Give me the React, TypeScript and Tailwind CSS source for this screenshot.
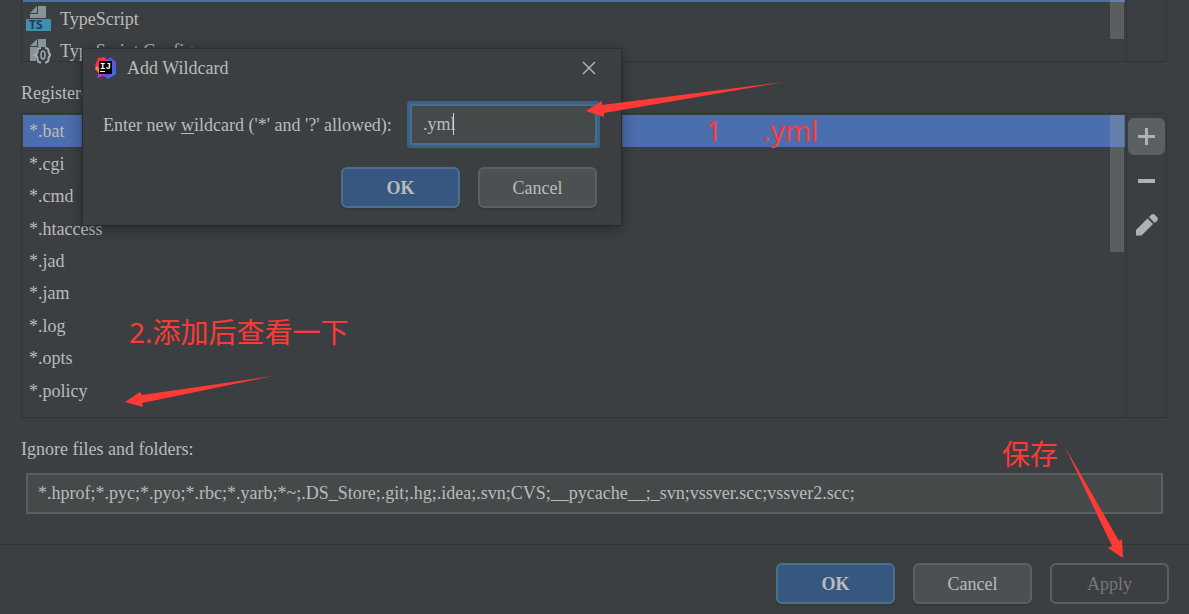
import { useState } from "react";
import type { ReactNode } from "react";

const patterns = [
  "*.bat",
  "*.cgi",
  "*.cmd",
  "*.htaccess",
  "*.jad",
  "*.jam",
  "*.log",
  "*.opts",
  "*.policy",
];

const TypeScriptIcon = () => (
  <svg width="25" height="26" viewBox="0 0 25 26" className="shrink-0" aria-hidden="true">
    <path d="M4 7 11 0v7z" fill="#87939a" />
    <path d="M12 0h8v12H4V8h8z" fill="#87939a" />
    <rect y="13" width="25" height="12" fill="#3e8fb0" />
    <text x="3" y="23" fontSize="12" fontWeight="700" fontFamily="Open Sans, sans-serif" fill="#22404e">
      TS
    </text>
  </svg>
);

const TypeScriptConfigIcon = () => (
  <svg width="25" height="26" viewBox="0 0 25 26" className="shrink-0" aria-hidden="true">
    <path d="M4 8 11 1v7z" fill="#87939a" />
    <path d="M12 1h8v22H4V9h8z" fill="#87939a" />
    <path d="M12 9h9l4 3v14H10V18l-2-1 2-2z" fill="#3c3f41" />
    <g fill="none" stroke="#a3adb3">
      <path
        d="M15 10c-3 0-3.500 1-3.500 3s0 3-2.500 4c2.500 1 2.500 2 2.500 4s.5 3.500 3.500 3.500M19 10c3 0 3.500 1 3.500 3s0 3 2.500 4c-2.500 1-2.500 2-2.500 4s-.5 3.500-3.500 3.500"
        strokeWidth="2"
      />
      <ellipse cx="17" cy="17" rx="2" ry="4" strokeWidth="1.500" />
    </g>
  </svg>
);

const IdeaLogo = () => (
  <svg width="22" height="22" viewBox="0 0 22 22" className="shrink-0" aria-hidden="true">
    <defs>
      <linearGradient id="ideaPink" x1="0" y1="0" x2="0.4" y2="1">
        <stop offset="0" stopColor="#ff2d5b" />
        <stop offset="0.5" stopColor="#e8315f" />
        <stop offset="1" stopColor="#9140d8" />
      </linearGradient>
      <linearGradient id="ideaBlue" x1="0" y1="0" x2="1" y2="1">
        <stop offset="0" stopColor="#2f6df2" />
        <stop offset="0.5" stopColor="#6150d6" />
        <stop offset="1" stopColor="#1f7df5" />
      </linearGradient>
    </defs>
    <path d="M3 8 0 12l4 4z" fill="#fd8425" />
    <path d="M3 1 9 0l6 5-3 13-10 3 2-7-4-5z" fill="url(#ideaPink)" />
    <path d="M0 11 2 9l2 2v5z" fill="#fd8425" />
    <path d="M12 3 15 0l6 5v12l-8 5-6-4h6z" fill="url(#ideaBlue)" />
    <rect x="4" y="4" width="13" height="13" fill="#000" />
    <text x="5" y="12" fontSize="9" fontWeight="700" fontFamily="Liberation Mono, monospace" fill="#fff">
      IJ
    </text>
    <rect x="5" y="14" width="5" height="1" fill="#fff" />
  </svg>
);

interface ButtonProps {
  kind: "primary" | "plain" | "disabled";
  children: ReactNode;
  onClick?: () => void;
}

const buttonKinds = {
  primary: "border-[#4c708c] bg-[#365880] font-bold shadow-[0_2px_2px_#35383a]",
  plain: "border-[#5e6060] bg-[#4c5052] shadow-[0_2px_2px_#35383a]",
  disabled: "border-[#5e6060] text-[#777777]",
};

const DialogButton = ({ kind, children, onClick }: ButtonProps) => (
  <button
    type="button"
    disabled={kind === "disabled"}
    onClick={onClick}
    className={`h-[41px] w-[119px] rounded-md border-2 ${buttonKinds[kind]}`}
  >
    {children}
  </button>
);

const Arrow = ({ points, className }: { points: string; className: string }) => (
  <svg className={`pointer-events-none absolute z-20 ${className}`} aria-hidden="true">
    <polygon points={points} fill="#ff3a36" />
  </svg>
);

const Note = ({ children, className }: { children: ReactNode; className: string }) => (
  <span
    className={`pointer-events-none absolute z-20 whitespace-pre font-['Noto_Sans','Noto_Sans_CJK_SC',sans-serif] text-[28px] leading-9 text-[#ff3a36] ${className}`}
  >
    {children}
  </span>
);

const AddWildcardDialog = () => {
  const [wildcard, setWildcard] = useState(".yml");

  return (
    <div
      role="dialog"
      aria-label="Add Wildcard"
      className="absolute left-[83px] top-[49px] z-10 w-[538px] bg-[#3c3f41] pb-[17px] pl-5 pr-6 shadow-[0_3px_14px_rgba(0,0,0,0.4),0_0_1px_1px_#333537]"
    >
      <div className="-ml-2 flex h-[38px] items-center gap-[10px]">
        <IdeaLogo />
        <h2 className="flex-1">Add Wildcard</h2>
        <button type="button" aria-label="Close">
          <svg width="15" height="14" viewBox="0 0 15 14" aria-hidden="true">
            <path d="M1 1l12 12M13 1 1 13" stroke="#b8babb" strokeWidth="1.4" />
          </svg>
        </button>
      </div>

      <div className="mt-[17px] flex items-center gap-[18px]">
        <label htmlFor="wildcard" className="whitespace-nowrap">
          Enter new <span className="underline underline-offset-2">w</span>ildcard ('*' and '?' allowed):
        </label>
        <div className="relative min-w-0 flex-1">
          <input
            id="wildcard"
            type="text"
            value={wildcard}
            onChange={(e) => setWildcard(e.target.value)}
            className="block h-[41px] w-full rounded-[1px] border-2 border-[#466d94] bg-[#45494a] px-[11px] ring-3 ring-[#3d6185] outline-none"
          />
          {/* text caret */}
          <span className="pointer-events-none absolute left-[43px] top-[9px] h-[22px] w-px bg-[#d0d0d0]" />
        </div>
      </div>

      <div className="mt-[22px] flex justify-end gap-[18px]">
        <DialogButton kind="primary">OK</DialogButton>
        <DialogButton kind="plain">Cancel</DialogButton>
      </div>
    </div>
  );
};

export default function App() {
  const [selected, setSelected] = useState(0);
  const [ignored, setIgnored] = useState(
    "*.hprof;*.pyc;*.pyo;*.rbc;*.yarb;*~;.DS_Store;.git;.hg;.idea;.svn;CVS;__pycache__;_svn;vssver.scc;vssver2.scc;",
  );

  return (
    <div className="relative min-h-screen overflow-hidden bg-[#3c3f41] font-['Liberation_Serif',serif] text-lg leading-6 text-[#bbbbbb]">
      <main className="pl-[21px] pr-[22px]">
        {/* Recognized file types */}
        <section className="flex h-[62px] border border-t-0 border-[#323435]">
          <div className="relative flex-1 px-px">
            <div className="h-[2px] bg-[#4b6eaf]" />
            <ul>
              <li className="flex h-[33px] items-center gap-[9px] pl-[3px]">
                <TypeScriptIcon />
                TypeScript
              </li>
              <li className="flex h-8 items-center gap-[9px] pl-[3px]">
                <TypeScriptConfigIcon />
                TypeScript Config
              </li>
            </ul>
            <div className="absolute right-[2px] top-0 h-[39px] w-[14px] bg-[#a6a6a6]/30" />
          </div>
          <div className="w-10 border-l border-[#323435]" />
        </section>

        {/* Registered patterns */}
        <h3 className="mb-2 mt-[19px]">Registered Patterns:</h3>
        <section className="flex h-[305px] border border-[#323435]">
          <div className="relative flex-1 p-px">
            <ul className="grid h-[292px] grid-rows-9">
              {patterns.map((pattern, i) => (
                <li
                  key={pattern}
                  onClick={() => setSelected(i)}
                  className={`flex items-center pl-[6px] ${i === selected ? "bg-[#4b6eaf]" : ""}`}
                >
                  {pattern}
                </li>
              ))}
            </ul>
            <div className="absolute right-[2px] top-px h-[137px] w-[14px] bg-[#a6a6a6]/30" />
          </div>
          <div className="flex w-10 flex-col items-center gap-[7px] border-l border-[#323435] pt-1">
            <button
              type="button"
              aria-label="Add"
              className="grid size-[37px] place-items-center rounded-md bg-[#5b6062]"
            >
              <svg width="17" height="17" viewBox="0 0 17 17" aria-hidden="true">
                <path d="M7 0h3v7h7v3h-7v7H7v-7H0V7h7z" fill="#afb1b3" />
              </svg>
            </button>
            <button type="button" aria-label="Remove" className="grid size-[37px] place-items-center">
              <svg width="17" height="17" viewBox="0 0 17 17" aria-hidden="true">
                <path d="M0 7h17v4H0z" fill="#afb1b3" />
              </svg>
            </button>
            <button type="button" aria-label="Edit" className="grid size-[37px] place-items-center">
              <svg width="22" height="22" viewBox="0 0 22 22" aria-hidden="true">
                <path d="M0 16 11.500 4.500 17 10 5.500 21.500H0z" fill="#afb1b3" />
                <path d="M13 3 15 1Q17-.8 19 1l2 2Q22.800 5 21 7L18.500 9z" fill="#afb1b3" />
              </svg>
            </button>
          </div>
        </section>

        <label htmlFor="ignored" className="mt-[19px] block">
          Ignore files and folders:
        </label>
        <div className="mt-3 pl-[5px] pr-1">
          <input
            id="ignored"
            type="text"
            value={ignored}
            onChange={(e) => setIgnored(e.target.value)}
            className="block h-[41px] w-full border-2 border-[#5c5f60] bg-[#45494a] px-[10px] outline-none"
          />
        </div>
      </main>

      <footer className="mt-[30px] flex justify-end gap-[18px] border-t border-[#323435] pb-[10px] pr-5 pt-[18px]">
        <DialogButton kind="primary">OK</DialogButton>
        <DialogButton kind="plain">Cancel</DialogButton>
        <DialogButton kind="disabled">Apply</DialogButton>
      </footer>

      <AddWildcardDialog />

      {/* Step notes drawn over the window */}
      <Arrow className="left-[580px] top-[76px] h-[50px] w-[210px]" points="6,35 22,25 22,29 204,6 24,37 24,41" />
      <Note className="left-[706px] top-[112px]">1</Note>
      <Note className="left-[763px] top-[112px]">.yml</Note>

      <Note className="left-[129px] top-[314px]">2.添加后查看一下</Note>
      <Arrow className="left-[120px] top-[370px] h-[50px] w-[160px]" points="5,32 20,22 22,25 153,6 22,33 23,37" />

      <Note className="right-[131px] top-[436px]">保存</Note>
      <Arrow className="right-[59px] top-[440px] h-[125px] w-[70px]" points="5,7 59,101 62,99 63,118 48,108 52,106" />
    </div>
  );
}
